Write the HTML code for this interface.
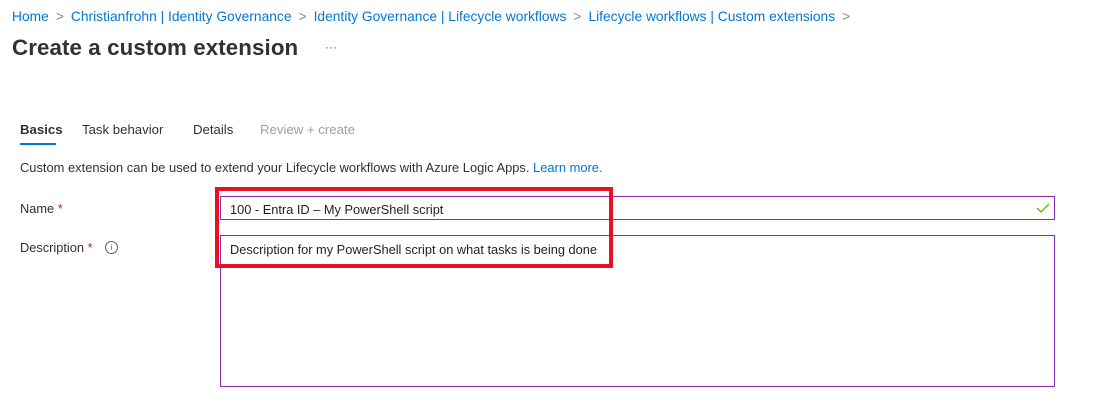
<!DOCTYPE html>
<html><head><style>
body{margin:0;width:1105px;height:404px;background:#fff;font-family:"Liberation Sans",sans-serif;position:relative;overflow:hidden;color:#323130}
.a{position:absolute;white-space:nowrap}
.bc{top:9px;left:12px;font-size:13.8px;color:#0078d4}
.bc .s{color:#8a8886;margin:0 7px}
h1{position:absolute;top:35px;left:12px;margin:0;font-size:22.3px;font-weight:600;color:#323130;letter-spacing:0.1px}
.tabs{top:122px;font-size:13.2px}
.inp{position:absolute;border:1px solid #8c2ab8;box-sizing:border-box;font-size:12.8px;color:#201f1f}
</style></head><body>
<div class="a bc">Home<span class="s">&gt;</span>Christianfrohn | Identity Governance<span class="s">&gt;</span>Identity Governance | Lifecycle workflows<span class="s">&gt;</span>Lifecycle workflows | Custom extensions<span class="s">&gt;</span></div>
<h1>Create a custom extension</h1>
<div class="a" style="top:40px;left:325px;font-size:12px;color:#605e5c">···</div>
<div class="a tabs" style="left:20px;font-weight:600">Basics</div>
<div style="position:absolute;left:20px;top:143px;width:36px;height:2px;background:#0078d4"></div>
<div class="a tabs" style="left:82px">Task behavior</div>
<div class="a tabs" style="left:193px">Details</div>
<div class="a tabs" style="left:260px;color:#a19f9d">Review + create</div>
<div class="a" style="top:160px;left:20px;font-size:12.9px">Custom extension can be used to extend your Lifecycle workflows with Azure Logic Apps. <span style="color:#0078d4">Learn more.</span></div>
<div class="a" style="top:201px;left:20px;font-size:12.8px">Name <span style="color:#a4262c">*</span></div>
<div class="a" style="top:240px;left:20px;font-size:12.8px">Description <span style="color:#a4262c">*</span></div>
<div class="a" style="top:241px;left:105px;width:11px;height:11px;border:1px solid #605e5c;border-radius:50%;font-size:8px;text-align:center;line-height:11px;color:#605e5c">i</div>
<div class="inp" style="left:220px;top:196px;width:835px;height:24px;padding:5px 0 0 9px">100 - Entra ID – My PowerShell script</div>
<svg style="position:absolute;left:1036px;top:202px" width="14" height="12"><path d="M1 6 L5 10 L13 2" stroke="#6bb700" stroke-width="1.3" fill="none"/></svg>
<div class="inp" style="left:220px;top:235px;width:835px;height:152px;padding:6px 0 0 9px">Description for my PowerShell script on what tasks is being done</div>
<div style="position:absolute;left:215px;top:187px;width:390px;height:73px;border:4px solid #e81123"></div>
</body></html>
